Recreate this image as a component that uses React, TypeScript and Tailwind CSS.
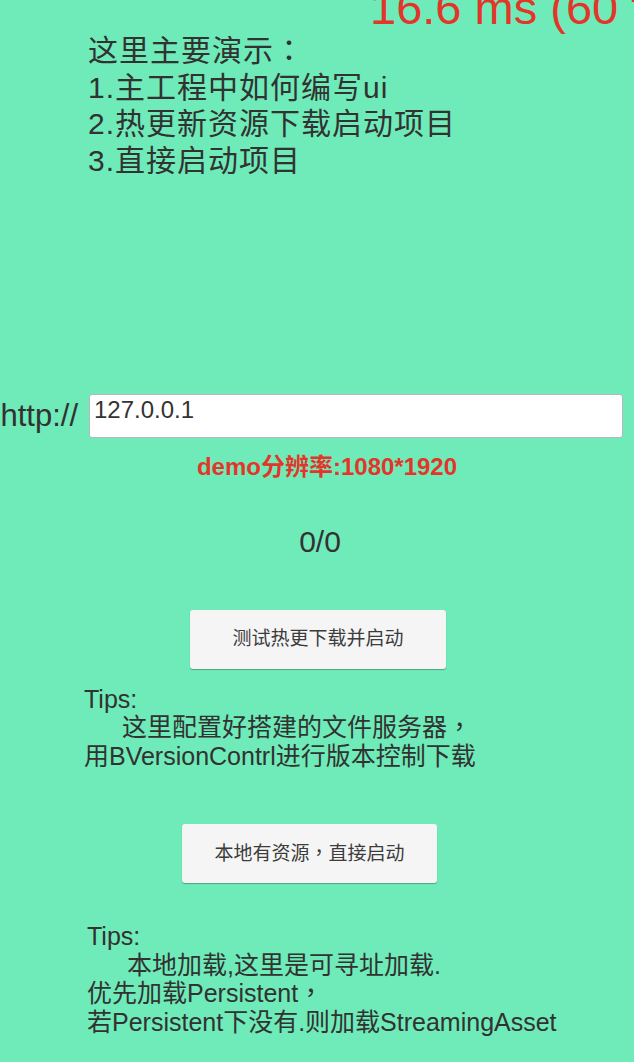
import React from "react";

function P({ children }: { children: React.ReactNode }) {
  return <span className="font-['Noto_Sans_CJK_TC',sans-serif] leading-[0px]">{children}</span>;
}

export default function App() {
  return (
    <div className="relative w-[634px] h-[1062px] overflow-hidden bg-[#6EEBB8] text-[#323232] font-['Liberation_Sans','Noto_Sans_CJK_SC',sans-serif]">
      <div className="absolute left-[370px] top-[-16px] whitespace-nowrap text-[47px] leading-[47px] text-[#E3362A]">
        16.6 ms (60 fps)
      </div>

      <div className="pt-[33px] pl-[88px] text-[30px] leading-[36.67px] tracking-[1px]">
        <div>
          这里主要演示<P>：</P>
        </div>
        <div>1.主工程中如何编写ui</div>
        <div>2.热更新资源下载启动项目</div>
        <div>3.直接启动项目</div>
      </div>

      <div className="mt-[214px] flex h-[44px]">
        <div className="w-[89px] shrink-0 whitespace-nowrap pr-[11px] text-right text-[31px] leading-[44px]">
          http://
        </div>
        <div className="w-[534px] h-[44px] shrink-0 rounded-[3px] border border-[#b8b8b8] bg-white pl-[4px] pt-[3px] text-[24px] leading-[24px] text-[#333333]">
          127.0.0.1
        </div>
      </div>

      <div className="mt-[17px] pl-[20px] text-center text-[24px] leading-[24px] font-bold text-[#E3362A]">
        demo分辨率:1080*1920
      </div>

      <div className="mt-[48px] pl-[6px] text-center text-[30px] leading-[30px]">0/0</div>

      <div className="mt-[53px] ml-[190px] flex h-[59px] w-[256px] items-center justify-center rounded-[3px] bg-[#f5f5f5] text-[19px] text-[#3c3c3c] shadow-[0_1px_1px_rgba(0,0,0,0.3)]">
        测试热更下载并启动
      </div>

      <div className="mt-[16px] ml-[84px] text-[25px] leading-[28.5px] whitespace-nowrap">
        <div>Tips:</div>
        <div className="pl-[38px]">
          这里配置好搭建的文件服务器<P>，</P>
        </div>
        <div>用BVersionContrl进行版本控制下载</div>
      </div>

      <div className="mt-[54px] ml-[182px] flex h-[59px] w-[255px] items-center justify-center rounded-[3px] bg-[#f5f5f5] text-[19px] leading-[19px] text-[#3c3c3c] shadow-[0_1px_1px_rgba(0,0,0,0.3)]">
        <span>
          本地有资源<P>，</P>直接启动
        </span>
      </div>

      <div className="mt-[39px] ml-[87px] text-[25px] leading-[28.5px] whitespace-nowrap">
        <div>Tips:</div>
        <div className="pl-[40px]">本地加载,这里是可寻址加载.</div>
        <div>
          优先加载Persistent<P>，</P>
        </div>
        <div>若Persistent下没有.则加载StreamingAsset</div>
      </div>
    </div>
  );
}
